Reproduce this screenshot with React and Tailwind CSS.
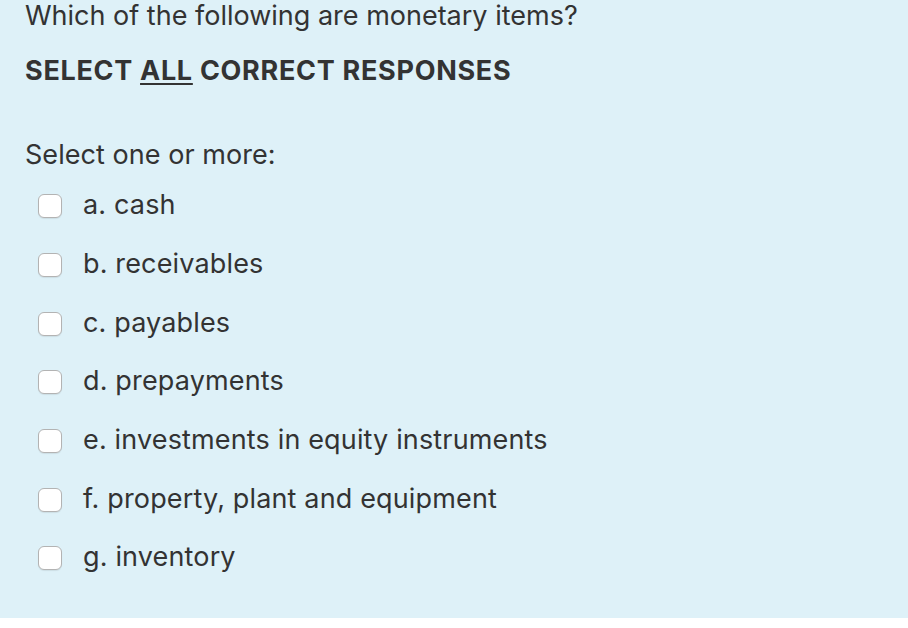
import React from "react";

const options = [
  "a. cash",
  "b. receivables",
  "c. payables",
  "d. prepayments",
  "e. investments in equity instruments",
  "f. property, plant and equipment",
  "g. inventory",
];

export default function App() {
  return (
    <div className="w-[908px] h-[628px] bg-white" style={{ fontFamily: "Inter, 'Liberation Sans', sans-serif" }}>
      <div className="h-[618px] bg-[#def1f8] text-[#333333] pl-[25px] pt-[1px]">
        <div className="text-[27px] leading-[30px]">Which of the following are monetary items?</div>
        <div className="text-[27px] leading-[30px] font-bold tracking-[0.7px] mt-[25px]">
          SELECT <span className="underline underline-offset-[3px] decoration-[2px]">ALL</span> CORRECT RESPONSES
        </div>
        <div className="text-[27px] leading-[30px] tracking-[0.05px] mt-[54px]">Select one or more:</div>
        <div className="flex flex-col mt-[7px] pl-[13px]">
          {options.map((o) => (
            <label key={o} className="flex items-center h-[58.7px] gap-[21px]">
              <span className="w-[24px] h-[24px] rounded-[6px] bg-white border border-[#b3b3b3] shadow-[0_1px_1px_rgba(0,0,0,0.08)]" />
              <span className="text-[27px] leading-[30px] tracking-[0.15px] -mt-[2px]">{o}</span>
            </label>
          ))}
        </div>
      </div>
    </div>
  );
}
